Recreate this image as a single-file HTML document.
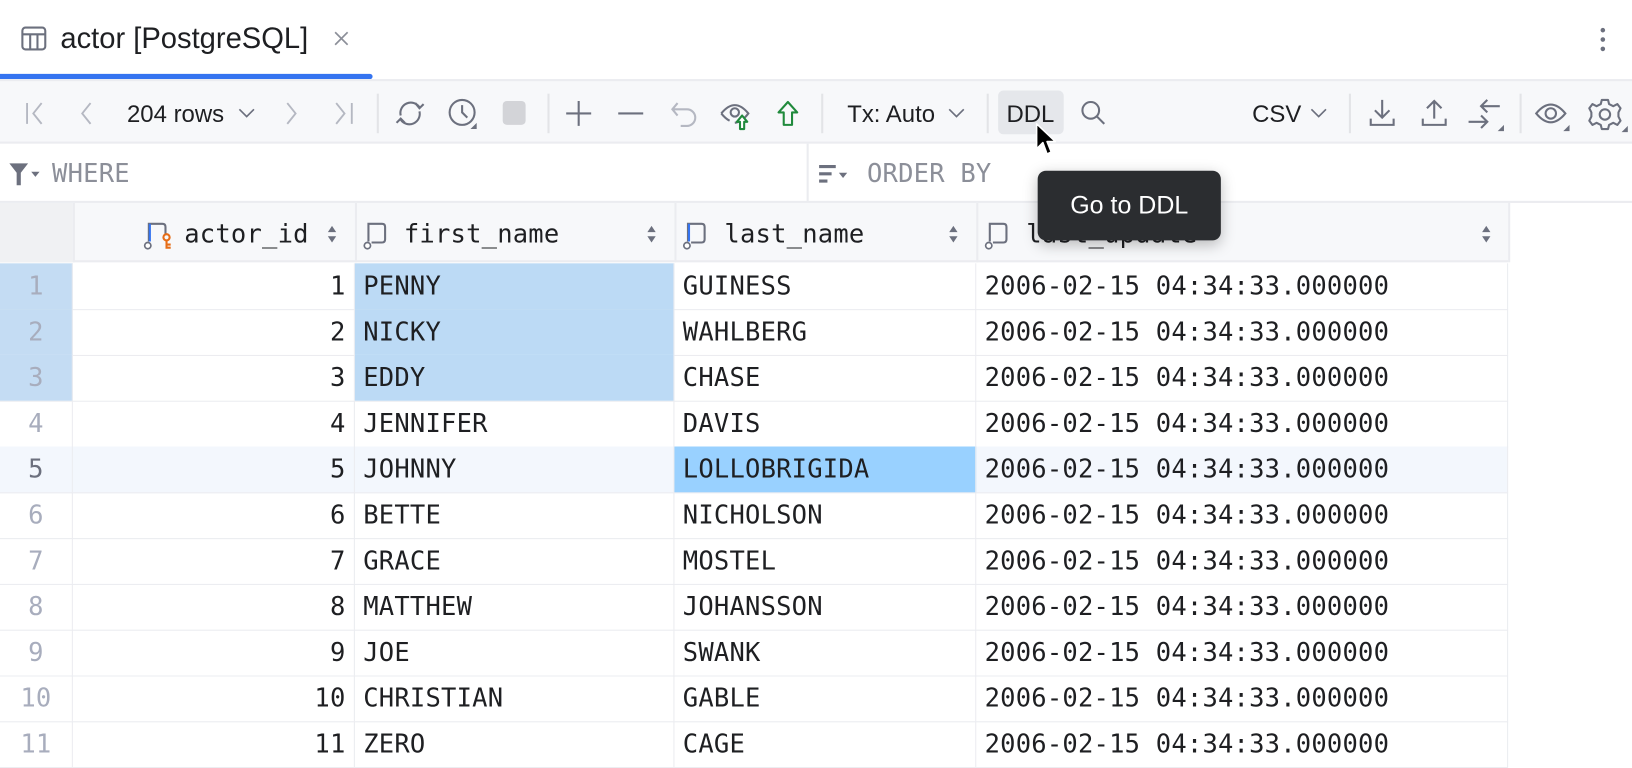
<!DOCTYPE html>
<html><head><meta charset="utf-8">
<style>
html,body{margin:0;padding:0;width:1632px;height:756px;overflow:hidden;background:#fff;}
#w{position:absolute;left:0;top:0;width:1568px;height:727px;transform:scale(1.0408);transform-origin:0 0;font-family:"Liberation Sans",sans-serif;color:#1e1f22;}
.a{position:absolute;}
.mono{font-family:"DejaVu Sans Mono","Liberation Mono",monospace;font-size:24.5px;letter-spacing:0.2px;}
.tb{font-size:23px;color:#1e1f22;}
.sep{position:absolute;top:90px;width:2px;height:38px;background:#e3e4e7;}
svg{position:absolute;overflow:visible;}
.row{position:absolute;left:0;width:1449px;height:44px;border-bottom:1.5px solid #ebecf0;}
.c{position:absolute;top:0;height:44px;line-height:44px;box-sizing:border-box;border-right:1.5px solid #ebecf0;}
.rn{left:0;width:70px;text-align:center;color:#a8adbd;}
.c1{left:70px;width:271px;text-align:right;padding-right:8px;}
.c2{left:341px;width:307px;padding-left:8px;}
.c3{left:648px;width:290px;padding-left:8px;}
.c4{left:938px;width:511px;padding-left:8px;}
</style></head><body><div id="w">
<svg style="left:20px;top:25px" width="26" height="26" viewBox="0 0 26 26"><rect x="1.5" y="1.5" width="22" height="21" rx="3" fill="none" stroke="#6c707e" stroke-width="2"/><line x1="1.5" y1="8" x2="23.5" y2="8" stroke="#6c707e" stroke-width="2"/><line x1="9" y1="8" x2="9" y2="22" stroke="#6c707e" stroke-width="2"/><line x1="16" y1="8" x2="16" y2="22" stroke="#6c707e" stroke-width="2"/></svg>
<div class="a" style="left:58px;top:21px;font-size:28px;">actor [PostgreSQL]</div>
<svg style="left:321px;top:30px" width="14" height="14"><path d="M1 1L13 13M13 1L1 13" stroke="#8c8f99" stroke-width="1.6"/></svg>
<svg style="left:1537px;top:26px" width="6" height="26"><circle cx="3" cy="3" r="2.2" fill="#6c707e"/><circle cx="3" cy="12" r="2.2" fill="#6c707e"/><circle cx="3" cy="21" r="2.2" fill="#6c707e"/></svg>
<div class="a" style="left:0;top:71px;width:358px;height:5px;background:#3574f0;border-radius:0 3px 3px 0;"></div>
<div class="a" style="left:0;top:76px;width:1568px;height:62px;background:#f7f8fa;border-top:2px solid #ebecf0;border-bottom:2px solid #ebecf0;box-sizing:border-box;"></div>
<svg style="left:24px;top:98px" width="20" height="22"><path d="M2 1V21M16 1L8 11L16 21" fill="none" stroke="#b5b8c2" stroke-width="1.8"/></svg>
<svg style="left:76px;top:98px" width="14" height="22"><path d="M11 1L3 11L11 21" fill="none" stroke="#b5b8c2" stroke-width="1.8"/></svg>
<div class="a tb" style="left:122px;top:96px;">204 rows</div>
<svg style="left:229px;top:104px" width="16" height="10"><path d="M1 1L8 8L15 1" fill="none" stroke="#6c707e" stroke-width="1.6"/></svg>
<svg style="left:273px;top:98px" width="14" height="22"><path d="M3 1L11 11L3 21" fill="none" stroke="#b5b8c2" stroke-width="1.8"/></svg>
<svg style="left:320px;top:98px" width="20" height="22"><path d="M3 1L11 11L3 21M18 1V21" fill="none" stroke="#b5b8c2" stroke-width="1.8"/></svg>
<div class="sep" style="left:362px"></div>
<svg style="left:378px;top:95px" width="32" height="28"><path d="M7 16A10 10 0 0 1 25 8M25 12A10 10 0 0 1 7 20" fill="none" stroke="#6c707e" stroke-width="2"/><path d="M21 4L25 9L29 5M3 23L7 19L11 23" fill="none" stroke="#6c707e" stroke-width="2"/></svg>
<svg style="left:430px;top:94px" width="32" height="32"><circle cx="14" cy="14" r="12" fill="none" stroke="#6c707e" stroke-width="2"/><path d="M14 7V14L19 19" fill="none" stroke="#6c707e" stroke-width="2"/><path d="M28 24V30H22Z" fill="#6c707e"/></svg>
<div class="a" style="left:483px;top:97px;width:22px;height:23px;background:#d3d4d8;border-radius:4px;"></div>
<div class="sep" style="left:526px"></div>
<svg style="left:544px;top:97px" width="24" height="24"><path d="M12 0V24M0 12H24" stroke="#6c707e" stroke-width="2"/></svg>
<svg style="left:594px;top:97px" width="24" height="24"><path d="M0 12H24" stroke="#6c707e" stroke-width="2"/></svg>
<svg style="left:645px;top:96px" width="26" height="26"><path d="M6 3L1 9L6 15M1 9H15A8 8 0 0 1 15 25H9" fill="none" stroke="#b5b8c2" stroke-width="2"/></svg>
<svg style="left:691px;top:95px" width="34" height="30"><path d="M2 14Q15 -2 28 14Q22 22 15 23" fill="none" stroke="#6c707e" stroke-width="2"/><path d="M2 14Q6 19 10 21" fill="none" stroke="#6c707e" stroke-width="2"/><circle cx="15" cy="13" r="4" fill="none" stroke="#6c707e" stroke-width="2"/><path d="M22 16L17 22H20V29H24V22H27Z" fill="#fff" stroke="#208a3c" stroke-width="2" stroke-linejoin="round"/></svg>
<svg style="left:745px;top:96px" width="24" height="26"><path d="M12 2L3 12H8V24H16V12H21Z" fill="none" stroke="#208a3c" stroke-width="2" stroke-linejoin="round"/></svg>
<div class="sep" style="left:789px"></div>
<div class="a tb" style="left:814px;top:96px;">Tx: Auto</div>
<svg style="left:911px;top:104px" width="16" height="10"><path d="M1 1L8 8L15 1" fill="none" stroke="#6c707e" stroke-width="1.6"/></svg>
<div class="sep" style="left:948px"></div>
<div class="a" style="left:959px;top:87px;width:63px;height:42px;background:#dfe1e5;border-radius:5px;opacity:.75"></div>
<div class="a tb" style="left:967px;top:96px;">DDL</div>
<svg style="left:1038px;top:96px" width="26" height="26"><circle cx="10" cy="10" r="8" fill="none" stroke="#6c707e" stroke-width="2"/><path d="M16 16L23 23" stroke="#6c707e" stroke-width="2"/></svg>
<div class="a tb" style="left:1203px;top:96px;">CSV</div>
<svg style="left:1259px;top:104px" width="16" height="10"><path d="M1 1L8 8L15 1" fill="none" stroke="#6c707e" stroke-width="1.6"/></svg>
<div class="sep" style="left:1296px"></div>
<svg style="left:1315px;top:95px" width="26" height="28"><path d="M13 1V18M6 11L13 18L20 11M2 19V25H24V19" fill="none" stroke="#6c707e" stroke-width="2"/></svg>
<svg style="left:1365px;top:95px" width="26" height="28"><path d="M13 19V2M6 9L13 2L20 9M2 19V25H24V19" fill="none" stroke="#6c707e" stroke-width="2"/></svg>
<svg style="left:1411px;top:93px" width="36" height="34"><path d="M12 9H30M18 3L12 9L18 15M0 24H18M12 18L18 24L12 30" fill="none" stroke="#6c707e" stroke-width="2"/><path d="M34 27V33H28Z" fill="#6c707e"/></svg>
<div class="sep" style="left:1460px"></div>
<svg style="left:1474px;top:96px" width="36" height="30"><path d="M2 13Q16 -4 30 13Q16 30 2 13Z" fill="none" stroke="#6c707e" stroke-width="2"/><circle cx="16" cy="13" r="5" fill="none" stroke="#6c707e" stroke-width="2"/><path d="M34 24V30H28Z" fill="#6c707e"/></svg>
<svg style="left:1526px;top:94px" width="38" height="34"><path d="M13 2H19L20 6L24 8L28 6L31 10L29 14V18L31 22L28 26L24 24L20 26L19 30H13L12 26L8 24L4 26L1 22L3 18V14L1 10L4 6L8 8L12 6Z" fill="none" stroke="#6c707e" stroke-width="2" stroke-linejoin="round"/><circle cx="16" cy="16" r="5" fill="none" stroke="#6c707e" stroke-width="2"/><path d="M38 27V33H32Z" fill="#6c707e"/></svg>
<svg style="left:8px;top:156px" width="30" height="24"><path d="M1 1H19L12 10V22H8V10Z" fill="#6c707e"/><path d="M22 9H30L26 14Z" fill="#6c707e"/></svg>
<div class="a mono" style="left:50px;top:152px;color:#8c8f99;">WHERE</div>
<div class="a" style="left:775px;top:138px;width:2px;height:56px;background:#ebecf0;"></div>
<svg style="left:787px;top:158px" width="34" height="20"><path d="M0 2H16M0 9H12M0 16H8" stroke="#6c707e" stroke-width="3"/><path d="M19 8H27L23 13Z" fill="#6c707e"/></svg>
<div class="a mono" style="left:833px;top:152px;color:#8c8f99;">ORDER BY</div>
<div class="a" style="left:0;top:193px;width:1568px;height:2px;background:#ebecf0;"></div>
<div class="a" style="left:0;top:195px;width:1449px;height:57px;background:#f7f8fa;border-bottom:2px solid #ebecf0;box-sizing:border-box;"></div>
<div class="a" style="left:0;top:195px;width:70px;height:57px;background:#f0f1f3;"></div>
<div class="a" style="left:70px;top:195px;width:1.5px;height:57px;background:#ebecf0;"></div>
<div class="a" style="left:341px;top:195px;width:1.5px;height:57px;background:#ebecf0;"></div>
<div class="a" style="left:648px;top:195px;width:1.5px;height:57px;background:#ebecf0;"></div>
<div class="a" style="left:938px;top:195px;width:1.5px;height:57px;background:#ebecf0;"></div>
<div class="a" style="left:1449px;top:195px;width:1.5px;height:57px;background:#ebecf0;"></div>
<svg style="left:138px;top:212px" width="34" height="28"><path d="M5 20V3H18Q21 3 21 6V14" fill="none" stroke="#6c707e" stroke-width="2"/><path d="M6 3V20" stroke="#3574f0" stroke-width="2"/><circle cx="4" cy="24" r="3" fill="#fff" stroke="#6c707e" stroke-width="1.6"/><circle cx="22" cy="16" r="3" fill="none" stroke="#e66d17" stroke-width="2"/><path d="M22 19V27M22 23H26M22 26H26" stroke="#e66d17" stroke-width="2"/></svg>
<div class="a mono" style="left:177px;top:210px;">actor_id</div>
<svg style="left:314px;top:216px" width="10" height="18"><path d="M1 7L5 1L9 7ZM1 11L5 17L9 11Z" fill="#6c707e"/></svg>
<svg style="left:349px;top:212px" width="30" height="28"><path d="M5 20V3H18Q21 3 21 6V18Q21 21 18 21H8" fill="none" stroke="#6c707e" stroke-width="2"/><circle cx="4" cy="24" r="3" fill="#fff" stroke="#6c707e" stroke-width="1.6"/></svg>
<div class="a mono" style="left:388px;top:210px;">first_name</div>
<svg style="left:621px;top:216px" width="10" height="18"><path d="M1 7L5 1L9 7ZM1 11L5 17L9 11Z" fill="#6c707e"/></svg>
<svg style="left:656px;top:212px" width="30" height="28"><path d="M5 20V3H18Q21 3 21 6V18Q21 21 18 21H8" fill="none" stroke="#6c707e" stroke-width="2"/><path d="M6 3V20" stroke="#3574f0" stroke-width="2"/><circle cx="4" cy="24" r="3" fill="#fff" stroke="#6c707e" stroke-width="1.6"/></svg>
<div class="a mono" style="left:696px;top:210px;">last_name</div>
<svg style="left:911px;top:216px" width="10" height="18"><path d="M1 7L5 1L9 7ZM1 11L5 17L9 11Z" fill="#6c707e"/></svg>
<svg style="left:946px;top:212px" width="30" height="28"><path d="M5 20V3H18Q21 3 21 6V18Q21 21 18 21H8" fill="none" stroke="#6c707e" stroke-width="2"/><circle cx="4" cy="24" r="3" fill="#fff" stroke="#6c707e" stroke-width="1.6"/></svg>
<div class="a mono" style="left:986px;top:210px;">last_update</div>
<svg style="left:1423px;top:216px" width="10" height="18"><path d="M1 7L5 1L9 7ZM1 11L5 17L9 11Z" fill="#6c707e"/></svg>
<div class="mono">
<div class="row" style="top:253px"><div class="c rn" style="background:#c4dcf3">1</div><div class="c c1">1</div><div class="c c2" style="background:#bcdaf5">PENNY</div><div class="c c3">GUINESS</div><div class="c c4">2006-02-15 04:34:33.000000</div></div>
<div class="row" style="top:297px"><div class="c rn" style="background:#c4dcf3">2</div><div class="c c1">2</div><div class="c c2" style="background:#bcdaf5">NICKY</div><div class="c c3">WAHLBERG</div><div class="c c4">2006-02-15 04:34:33.000000</div></div>
<div class="row" style="top:341px"><div class="c rn" style="background:#c4dcf3">3</div><div class="c c1">3</div><div class="c c2" style="background:#bcdaf5">EDDY</div><div class="c c3">CHASE</div><div class="c c4">2006-02-15 04:34:33.000000</div></div>
<div class="row" style="top:385px"><div class="c rn">4</div><div class="c c1">4</div><div class="c c2">JENNIFER</div><div class="c c3">DAVIS</div><div class="c c4">2006-02-15 04:34:33.000000</div></div>
<div class="row" style="top:429px;background:#f3f7fd"><div class="c rn" style="color:#6c707e">5</div><div class="c c1">5</div><div class="c c2">JOHNNY</div><div class="c c3" style="background:#99d1ff">LOLLOBRIGIDA</div><div class="c c4">2006-02-15 04:34:33.000000</div></div>
<div class="row" style="top:473px"><div class="c rn">6</div><div class="c c1">6</div><div class="c c2">BETTE</div><div class="c c3">NICHOLSON</div><div class="c c4">2006-02-15 04:34:33.000000</div></div>
<div class="row" style="top:517px"><div class="c rn">7</div><div class="c c1">7</div><div class="c c2">GRACE</div><div class="c c3">MOSTEL</div><div class="c c4">2006-02-15 04:34:33.000000</div></div>
<div class="row" style="top:561px"><div class="c rn">8</div><div class="c c1">8</div><div class="c c2">MATTHEW</div><div class="c c3">JOHANSSON</div><div class="c c4">2006-02-15 04:34:33.000000</div></div>
<div class="row" style="top:605px"><div class="c rn">9</div><div class="c c1">9</div><div class="c c2">JOE</div><div class="c c3">SWANK</div><div class="c c4">2006-02-15 04:34:33.000000</div></div>
<div class="row" style="top:649px"><div class="c rn">10</div><div class="c c1">10</div><div class="c c2">CHRISTIAN</div><div class="c c3">GABLE</div><div class="c c4">2006-02-15 04:34:33.000000</div></div>
<div class="row" style="top:693px"><div class="c rn">11</div><div class="c c1">11</div><div class="c c2">ZERO</div><div class="c c3">CAGE</div><div class="c c4">2006-02-15 04:34:33.000000</div></div>
</div>
<div class="a" style="left:997px;top:164px;width:176px;height:67px;background:#2b2d30;border-radius:8px;box-shadow:0 4px 14px rgba(0,0,0,.25);color:#fff;font-size:24px;line-height:67px;text-align:center;">Go to DDL</div>
<svg style="left:994px;top:118px" width="22" height="34"><path d="M2 1V25L8 19L12 30L16 28L12 18H20Z" fill="#000" stroke="#fff" stroke-width="1.5" stroke-linejoin="round"/></svg>
</div></body></html>
